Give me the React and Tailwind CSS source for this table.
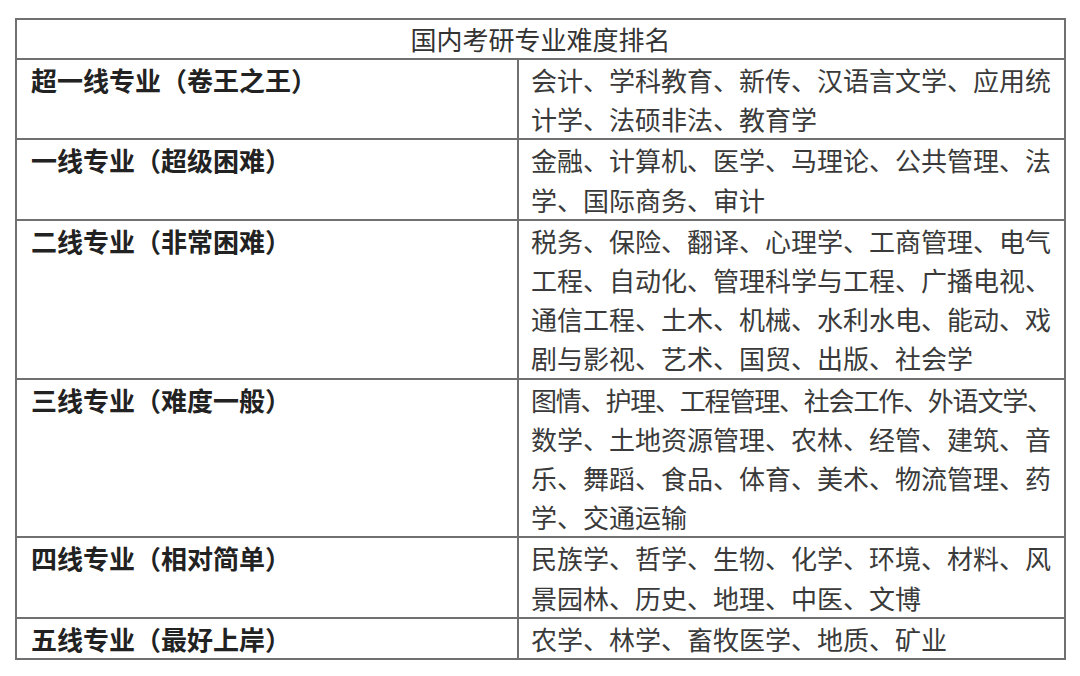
const ROWS = [
  {
    label: '超一线专业（卷王之王）',
    lines: ['会计、学科教育、新传、汉语言文学、应用统', '计学、法硕非法、教育学'],
  },
  {
    label: '一线专业（超级困难）',
    lines: ['金融、计算机、医学、马理论、公共管理、法', '学、国际商务、审计'],
  },
  {
    label: '二线专业（非常困难）',
    lines: [
      '税务、保险、翻译、心理学、工商管理、电气',
      '工程、自动化、管理科学与工程、广播电视、',
      '通信工程、土木、机械、水利水电、能动、戏',
      '剧与影视、艺术、国贸、出版、社会学',
    ],
  },
  {
    label: '三线专业（难度一般）',
    lines: [
      '图情、护理、工程管理、社会工作、外语文学、',
      '数学、土地资源管理、农林、经管、建筑、音',
      '乐、舞蹈、食品、体育、美术、物流管理、药',
      '学、交通运输',
    ],
  },
  {
    label: '四线专业（相对简单）',
    lines: ['民族学、哲学、生物、化学、环境、材料、风', '景园林、历史、地理、中医、文博'],
  },
  {
    label: '五线专业（最好上岸）',
    lines: ['农学、林学、畜牧医学、地质、矿业'],
  },
];

export default function App() {
  return (
    <div className="w-[1080px] h-[676px] bg-white overflow-hidden pt-[18px] pl-[15px] font-['Noto_Sans_CJK_SC',sans-serif] text-[#2a2a2a]">
      <table className="w-[1049px] border-collapse border-2 border-[#707070] table-fixed">
        <colgroup>
          <col className="w-[502px]" />
          <col className="w-[547px]" />
        </colgroup>
        <tbody>
          <tr>
            <td colSpan={2} className="border-2 border-[#707070] p-0 h-[39px] text-center text-[26px] leading-[38px] font-normal text-[#333]">
              国内考研专业难度排名
            </td>
          </tr>
          {ROWS.map((r) => (
            <tr key={r.label}>
              <td className="border-2 border-[#707070] p-0 pl-[14px] align-top text-[26px] leading-[39.2px] font-bold text-[#222] whitespace-nowrap">
                {r.label}
              </td>
              <td className="border-2 border-[#707070] p-0 pl-[12px] align-top text-[26px] leading-[39.2px] text-[#3a3a3a] whitespace-nowrap">
                {r.lines.map((l, i) => (
                  <div key={i} className={l.length > 20 ? 'tracking-[-1.2px]' : ''}>
                    {l}
                  </div>
                ))}
              </td>
            </tr>
          ))}
        </tbody>
      </table>
    </div>
  );
}
